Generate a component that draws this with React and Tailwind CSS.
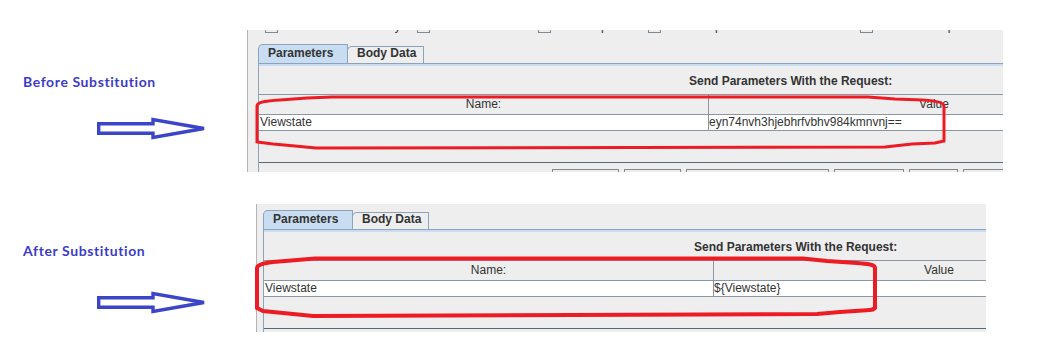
const ui = "font-['Liberation_Sans',Arial,sans-serif]";

const checks = [
  { label: "Redirect Automatically", w: "w-[152px]" },
  { label: "Follow Redirects", w: "w-[121px]" },
  { label: "Use KeepAlive", w: "w-[110px]" },
  { label: "Use multipart/form-data for POST", w: "w-[212px]" },
  { label: "Browser-compatible headers", w: "w-[200px]" },
];

const buttons = ["w-[67px]", "w-[57px]", "w-[143px]", "w-[70px]", "w-[49px]", "w-[90px]"];

function Arrow() {
  return (
    <svg width="115" height="25" viewBox="0 0 115 25" className="block">
      <path
        d="M3.7 7.7H58V3.5L109 12.5L58 21.5V17.3H3.7Z"
        fill="#fff"
        stroke="#3c45c8"
        strokeWidth="3.4"
      />
    </svg>
  );
}

function CheckStrip() {
  return (
    <div className="h-[3px] overflow-hidden ml-[7px]">
      <div className="flex -mt-[10px] h-[13px]">
        {checks.map((c) => (
          <div key={c.label} className={`${c.w} shrink-0 flex gap-[4px]`}>
            <div className="w-[13px] h-[13px] border border-[#7a8a99] bg-[#eeeeee]" />
            <span className="text-[12px] leading-[13px] text-[#333] whitespace-nowrap">{c.label}</span>
          </div>
        ))}
      </div>
    </div>
  );
}

function Panel({ strip, value, className }) {
  return (
    <div className={`bg-[#eeeeee] border-l border-[#b4b4b4] overflow-hidden shrink-0 ${ui} ${className}`}>
      {strip && <CheckStrip />}
      <div className={`flex items-end ${strip ? "mt-[11px]" : "mt-[6px]"}`}>
        <div className="w-[90px] h-[19px] pl-[9px] bg-[#c8ddf2] border border-b-0 border-[#8da2bb] rounded-tl-[5px] text-[12px] leading-[17px] font-bold text-[#333]">
          Parameters
        </div>
        <div className="w-[77px] h-[17px] pl-[9px] -ml-px bg-[#eeeeee] border border-b-0 border-[#8da2bb] rounded-tl-[5px] text-[12px] leading-[13px] font-bold text-[#333]">
          Body Data
        </div>
      </div>
      <div className="w-[1100px] border-l border-t border-[#8da2bb]">
        <div className="h-[2px] bg-[#c8ddf2]" />
        <div className="mt-[8px] h-[14px] pl-[430px] text-[12px] leading-[14px] font-bold text-[#333] whitespace-nowrap">
          Send Parameters With the Request:
        </div>
        <div className="mt-[6px] text-[12px] text-[#333]">
          <div className="flex h-[21px] border-t border-b border-[#8a96a3] leading-[19px]">
            <div className="w-[450px] border-r border-[#8a96a3] text-center">Name:</div>
            <div className="w-[450px] text-center">Value</div>
          </div>
          <div className="flex h-[16px] bg-white border-b border-[#8a96a3] leading-[15px]">
            <div className="w-[450px] border-r border-[#8a96a3] pl-[1px]">Viewstate</div>
            <div className="w-[450px]">{value}</div>
          </div>
          <div className="h-[32px] border-b border-[#55677a]" />
        </div>
        <div className="mt-[6px] ml-[293px] flex gap-[5px]">
          {buttons.map((w, i) => (
            <div key={i} className={`${w} h-[22px] border border-[#7a8a99] bg-[#eeeeee]`} />
          ))}
        </div>
      </div>
    </div>
  );
}

export default function App() {
  return (
    <div className="relative w-[1061px] h-[351px] bg-white overflow-hidden">
      <div className="flex h-[190px]">
        <div className="w-[247px] shrink-0 pt-[74px]">
          <div className="pl-[23px] h-[16px] leading-[16px] text-[14px] tracking-[0.6px] font-bold text-[#3c3cc8] font-['Lato',sans-serif] whitespace-nowrap">
            Before Substitution
          </div>
          <div className="mt-[26px] ml-[95px]">
            <Arrow />
          </div>
        </div>
        <Panel strip value="eyn74nvh3hjebhrfvbhv984kmnvnj==" className="mt-[30px] w-[756px] h-[142px] pl-[10px]" />
      </div>
      <div className="flex h-[161px]">
        <div className="w-[256px] shrink-0 pt-[53px]">
          <div className="pl-[23px] h-[16px] leading-[16px] text-[14px] tracking-[0.6px] font-bold text-[#3c3cc8] font-['Lato',sans-serif] whitespace-nowrap">
            After Substitution
          </div>
          <div className="mt-[31px] ml-[95px]">
            <Arrow />
          </div>
        </div>
        <Panel value="${Viewstate}" className="mt-[14px] w-[730px] h-[128px] pl-[6px]" />
      </div>
      <svg className="absolute inset-0 pointer-events-none" width="1061" height="351" viewBox="0 0 1061 351">
        <path
          d="M257 106C257 103 262 101 280 100L307 98L332 97L868 97L895 99L923 100C938 101 944 103 944 106L944 141L935 143L912 144L885 147L316 148L295 146L273 144L257 142Z"
          fill="none"
          stroke="#ed1c24"
          strokeWidth="3"
        />
        <path
          d="M257 268C257 265 263 263 273 262L315 258.5L803 258.5L827 261L857 263C870 264 875 265 875 268L875 308C873 310 870 310 870 310L840 312L817 314L313 316L283 313L263 311L257 308Z"
          fill="none"
          stroke="#ed1c24"
          strokeWidth="4"
        />
      </svg>
    </div>
  );
}
